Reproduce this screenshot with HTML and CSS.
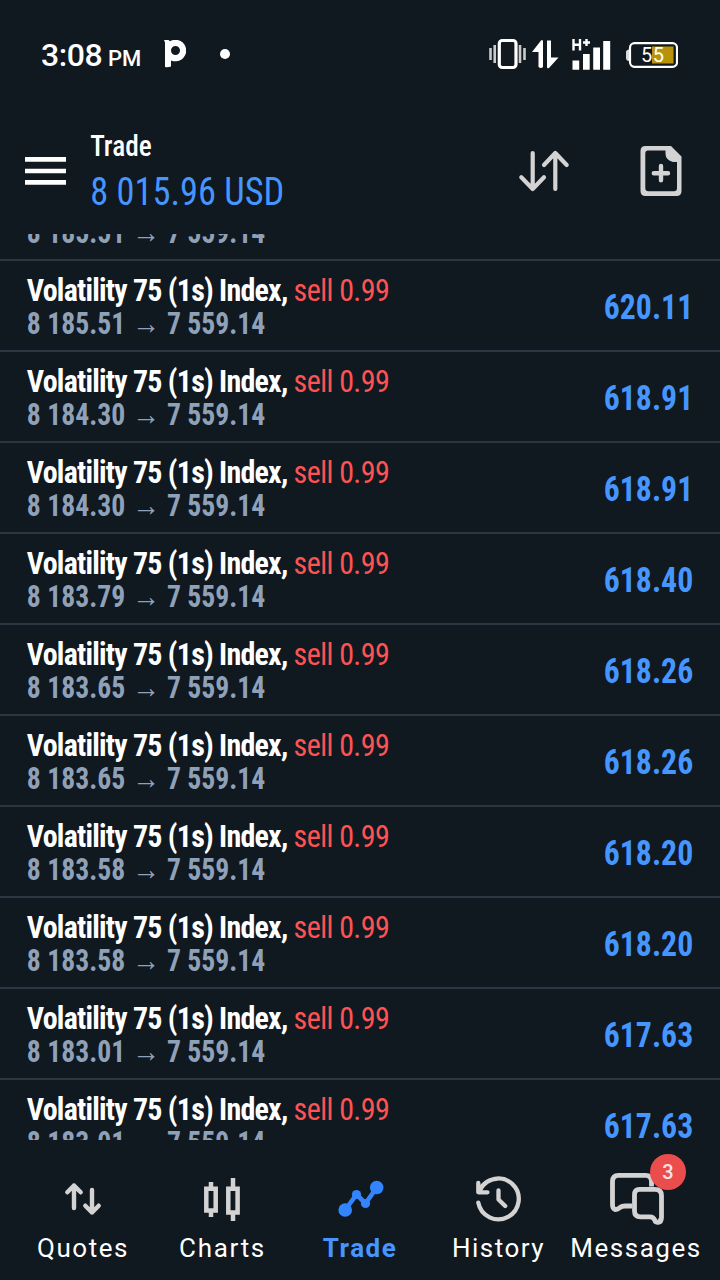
FILE: index.html
```html
<!DOCTYPE html>
<html lang="en">
<head>
<meta charset="utf-8">
<title>Trade</title>
<link rel="stylesheet" href="styles.css">
</head>
<body>
<div class="app">
  <div class="status">
    <span class="time">3:08</span><span class="ampm">PM</span>
    <svg class="p-logo" width="22" height="28" viewBox="0 0 22 28"><path fill="#fff" fill-rule="evenodd" d="M0 0H4.500L6 1.200A10.800 10.800 0 1 1 7 20.400V26.500Q4 27.500 1 27V2.500ZM11.500 6A4.500 4.500 0 1 0 11.500 15A4.500 4.500 0 1 0 11.500 6Z"/></svg>
    <span class="dot"></span>
    <svg class="signals" width="190" height="36" viewBox="488 36 190 36">
      <rect x="499.300" y="40.500" width="16.700" height="27" rx="3" fill="none" stroke="#fff" stroke-width="3.200"/>
      <path d="M490.500 48V60M494.700 45V63M520 45V63M524.500 48V60" stroke="#c9cbcd" stroke-width="2.600"/>
      <path fill="#fff" d="M538.500 68V52H532L541 40.500Q542.500 39.500 543 41V67Q541 69 538.500 67ZM547 40.500H551V57.500H558.500L549 68Q547 69 547 67Z"/>
      <path fill="#fff" d="M572.500 60.500h6.700v9.300h-6.700zM583 54h6.700v15.800H583zM593.200 47.500h6.800v22.300h-6.800zM603.200 41h7v28.800h-7z"/>
      <path d="M573.500 39V50.500M580 39V50.500M573.500 44.800H580M583 42.500H590M586.500 39V46" fill="none" stroke="#fff" stroke-width="2.400"/>
      <path d="M629 49.500Q626 50 626 52V58Q626 60.500 629 61Z" fill="#d9dbdd"/>
      <rect x="630" y="43.200" width="47" height="23.600" rx="4.500" fill="none" stroke="#fff" stroke-width="2.200"/>
      <rect x="652" y="46.500" width="21.500" height="17" fill="#b8930a"/>
      <text x="641" y="61.700" class="battery">55</text>
    </svg>
  </div>
  <header class="header">
    <svg class="burger" width="66" height="28" viewBox="0 0 66 28"><path d="M0 2.400H41M0 14H41M0 25.300H41" stroke="#fff" stroke-width="4.700"/></svg>
    <div class="heading">
      <div class="title">Trade</div>
      <div class="balance">8 015.96 USD</div>
    </div>
    <svg class="sort" width="52" height="44" viewBox="518 149 52 44" fill="none" stroke="#d4d3d3" stroke-width="4.200" stroke-linecap="round" stroke-linejoin="round"><path d="M532.700 153V189M521.300 177.200L532.700 189L544 177.200M555.300 189V153M544 165L555.300 153L566.700 165"/></svg>
    <svg class="new" width="42" height="50" viewBox="640 146 42 50"><path fill="#d4d3d3" fill-rule="evenodd" d="M645.500 146H671L681.500 156.500V191Q681.500 196 676.500 196H645.500Q640.500 196 640.500 191V151Q640.500 146 645.500 146ZM648 150.500Q645.300 150.500 645.300 153.500V188Q645.300 191.200 648.500 191.200H674Q677 191.200 677 188V162H673Q665.700 160 665.500 154V150.500Z"/><path d="M653.800 173.200H668M661 166V180.300" stroke="#d4d3d3" stroke-width="4.400" stroke-linecap="round"/></svg>
  </header>
  <main class="list" id="list"></main>
  <nav class="tabs">
    <a class="tab quotes"><svg width="44" height="50" viewBox="61 1174 44 50" fill="none" stroke="#d4d3d3" stroke-width="4.400" stroke-linecap="round" stroke-linejoin="round"><path d="M74 1208V1185.500M67.300 1192.300L74 1185.500L80.700 1192.300M92 1190V1212.500M85.300 1205.700L92 1212.500L98.700 1205.700"/></svg><span>Quotes</span></a>
    <a class="tab charts"><svg width="44" height="50" viewBox="200 1174 44 50" fill="none" stroke="#d4d3d3" stroke-width="4.500"><path d="M206.300 1188.700H215.700V1210.500H206.300ZM228.300 1188.700H237.600V1212.500H228.300ZM211 1182V1188M211 1211V1217M233 1178V1188M233 1213V1221"/></svg><span>Charts</span></a>
    <a class="tab trade"><svg width="48" height="50" viewBox="336 1174 48 50" fill="#3385ff"><path d="M345.200 1210L356.500 1194.500L365.500 1203.500L376.700 1187.500" fill="none" stroke="#3385ff" stroke-width="4.600"/><circle cx="345.200" cy="1210" r="6.800"/><circle cx="356.500" cy="1194.500" r="4.600"/><circle cx="365.500" cy="1203.500" r="4.600"/><circle cx="376.700" cy="1187.500" r="6.800"/></svg><span>Trade</span></a>
    <a class="tab history"><svg width="48" height="50" viewBox="474.500 1174 48 50" fill="none" stroke="#d4d3d3" stroke-width="4.300" stroke-linecap="round" stroke-linejoin="round"><path d="M478.800 1202.700A20.400 20.400 0 1 0 480.500 1190M478.800 1183V1192.300H488M480 1190.500A20.400 20.400 0 0 1 498.500 1178.600M499 1190.500V1199.500L505.700 1206"/></svg><span>History</span></a>
    <a class="tab messages"><svg width="56" height="54" viewBox="608 1172 56 54" fill="none" stroke="#d4d3d3" stroke-width="4.800" stroke-linejoin="round"><path d="M651.500 1186.500V1181.500Q651.500 1175.300 645.500 1175.300H618.500Q612.500 1175.300 612.500 1181.500V1204.500C612.500 1210.500 616.500 1210.500 620 1207.500Q622 1206 625 1206H632M639.500 1189.300H655Q661.500 1189.300 661.500 1195.500V1217.500C661.500 1224 655 1223 655 1220.500Q653.500 1216.800 650 1216.800H640.500Q634.500 1216.800 634.500 1211V1195Q634.500 1189.300 639.500 1189.300Z"/></svg><span>Messages</span><b class="badge">3</b></a>
  </nav>
</div>
<script src="rows.js"></script>
</body>
</html>
```
FILE: styles.css
```css
body { margin: 0; background: #101820; color: #fff; font-family: Roboto, sans-serif; }
.app { width: 720px; height: 1280px; display: flex; flex-direction: column; overflow: hidden; }
.status { height: 108px; display: flex; align-items: flex-start; box-sizing: border-box; padding: 36px 0 0 41px; }
.time { font-size: 32px; line-height: 38px; font-weight: 500; width: 67px; white-space: nowrap; letter-spacing: -0.4px; }
.ampm { font-size: 22px; line-height: 26px; font-weight: 500; margin-top: 10px; width: 56px; }
.p-logo { margin-top: 4px; }
.dot { width: 10px; height: 10px; border-radius: 50%; background: #fff; margin: 13px 258px 0 34px; }
.battery { font-size: 20px; fill: #fff; letter-spacing: 0.5px; }
.header { height: 126px; display: flex; align-items: flex-start; box-sizing: border-box; padding-left: 24.5px; }
.burger { margin-top: 49px; flex: none; }
.heading { width: 427.5px; padding-top: 21px; font-family: "Roboto Condensed", Roboto, sans-serif; font-stretch: 75%; white-space: nowrap; }
.title, .balance { width: max-content; transform: translateX(-0.8px) scaleX(0.945); transform-origin: left; }
.title { font-size: 29px; line-height: 34px; font-weight: 500; }
.balance { font-size: 38.5px; line-height: 44px; margin-top: 7px; color: #4596ff; }
.sort { margin-top: 41px; }
.new { margin: 38px 0 0 70px; }
.list { height: 906px; overflow: hidden; font-family: "Roboto Condensed", Roboto, sans-serif; font-stretch: 75%; white-space: nowrap; }
.row { height: 91px; box-sizing: border-box; border-bottom: 2px solid #2a3642; padding: 12.6px 27px 0 27px; display: flex; justify-content: space-between; }
.row:first-child { margin-top: -64px; }
.name, .prices { width: max-content; font-size: 31px; line-height: 33px; font-weight: 700; letter-spacing: -0.8px; transform: translateX(-0.2px) scaleX(0.968); transform-origin: left; }
.side { font-weight: 400; color: #ff5353; letter-spacing: -0.6px; }
.prices { color: #8fa1b9; letter-spacing: 0; transform: translateX(-0.2px) scaleX(0.893); }
.arrow { margin: 0 0.5px 0 1px; }
.profit { font-size: 34.4px; line-height: 40px; padding-top: 13.4px; font-weight: 700; color: #4596ff; transform: translateX(0.3px) scaleX(0.923); transform-origin: right; }
.tabs { height: 140px; display: flex; box-sizing: border-box; padding: 34px 15px 0; justify-content: space-between; }
.tab { display: flex; flex-direction: column; align-items: center; width: 138px; position: relative; flex: none; }
.quotes { margin-left: -1px; margin-right: 1px; }
.tab svg { flex: none; }
.messages svg { margin: -2px 0; }
.tab span { font-size: 26px; line-height: 30px; letter-spacing: 1.5px; margin-top: 9px; white-space: nowrap; }
.charts span { letter-spacing: 1.7px; padding-left: 1px; }
.history span { padding-left: 1px; }
.trade span { color: #4596ff; font-weight: 700; }
.badge { position: absolute; top: -20px; left: 83px; width: 36px; height: 36px; border-radius: 50%; background: #eb4d4d; font-size: 20px; line-height: 37px; text-align: center; font-weight: 500; color: #f3e3e4; }
```
FILE: rows.js
```js
const rows = [
  ["8 185.51", "620.11"], ["8 185.51", "620.11"], ["8 184.30", "618.91"],
  ["8 184.30", "618.91"], ["8 183.79", "618.40"], ["8 183.65", "618.26"],
  ["8 183.65", "618.26"], ["8 183.58", "618.20"], ["8 183.58", "618.20"],
  ["8 183.01", "617.63"], ["8 183.01", "617.63"]
];
document.getElementById("list").innerHTML = rows.map(([open, profit]) => `
  <div class="row">
    <div><div class="name">Volatility 75 (1s) Index, <span class="side">sell 0.99</span></div>
    <div class="prices">${open} <span class="arrow">→</span> 7 559.14</div></div>
    <div class="profit">${profit}</div>
  </div>`).join("");
```
